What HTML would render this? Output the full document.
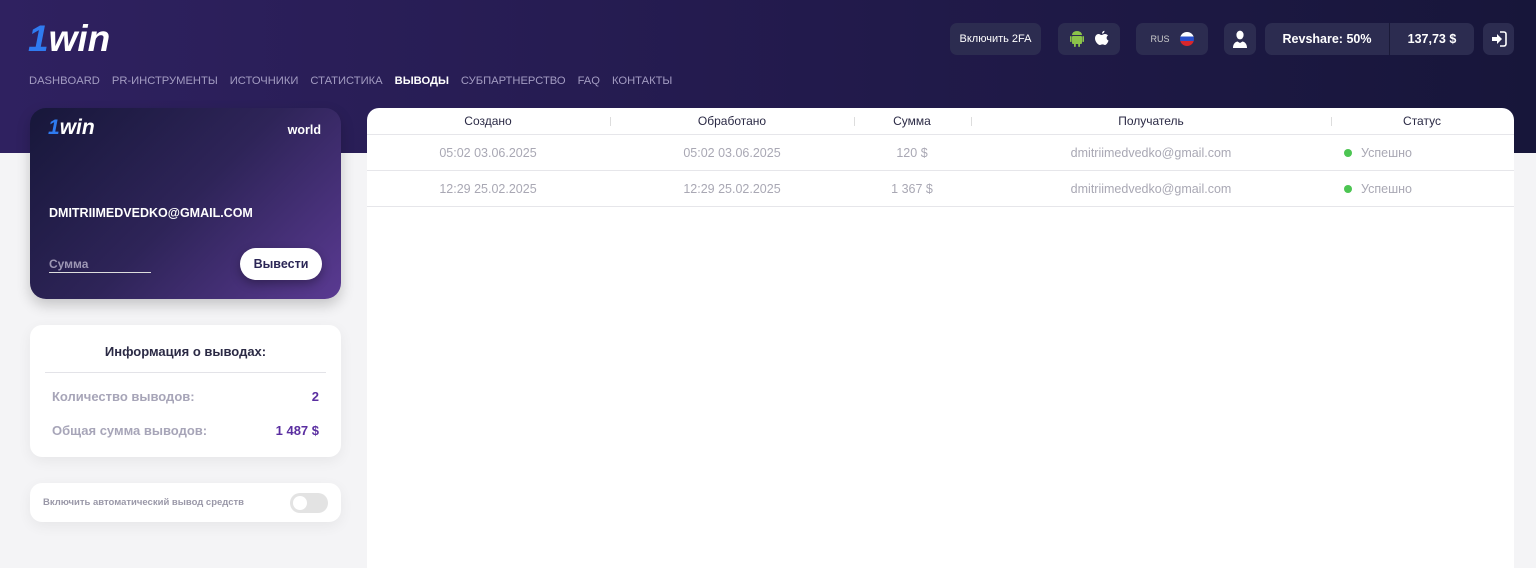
<!DOCTYPE html>
<html><head><meta charset="utf-8"><style>
*{margin:0;padding:0;box-sizing:border-box}
body{width:1536px;height:559px;overflow:hidden;background:#f4f4f6;font-family:"Liberation Sans","Noto Sans CJK SC",sans-serif;position:relative}
.hdr{position:absolute;left:0;top:0;width:1536px;height:153px;background:linear-gradient(90deg,#2f2160 0%,#241b4f 45%,#17163a 100%)}
.logo{position:absolute;font-weight:bold;font-style:italic;color:#fff;letter-spacing:0px}
.nav{position:absolute;top:75px;left:29px;font-size:11.2px;color:#a39cc2;white-space:nowrap}
.nav span{margin-right:12px}
.btn{position:absolute;top:23px;height:32px;background:#2c2c50;border-radius:7px;color:#fff;font-size:11px;display:flex;align-items:center;justify-content:center}
.card{position:absolute;left:30px;top:108px;width:311px;height:191px;border-radius:16px;background:linear-gradient(135deg,#17173a 0%,#2e2458 50%,#5a3a92 100%);box-shadow:0 6px 14px rgba(0,0,0,.2);color:#fff}
.box{position:absolute;left:30px;background:#fff;border-radius:12px;box-shadow:0 4px 14px rgba(0,0,0,.06)}
.tbl{position:absolute;left:367px;top:108px;width:1147px;height:460px;background:#fff;border-radius:12px 12px 0 0}
.row{position:absolute;left:0;width:1147px;border-bottom:1px solid #e6e6ea;font-size:12.5px}
.c{position:absolute;transform:translateX(-50%);white-space:nowrap}
.sep{position:absolute;top:9px;width:1px;height:9px;background:#ddd}
</style></head><body>
<div class="hdr"></div>
<div class="logo" style="left:28px;top:18px;font-size:37px"><span style="color:#2f7bf0">1</span>win</div>
<div class="nav"><span>DASHBOARD</span><span>PR-ИНСТРУМЕНТЫ</span><span>ИСТОЧНИКИ</span><span>СТАТИСТИКА</span><span style="color:#fff;font-weight:bold">ВЫВОДЫ</span><span>СУБПАРТНЕРСТВО</span><span>FAQ</span><span>КОНТАКТЫ</span></div>
<div class="btn" style="left:950px;width:91px">Включить 2FA</div>
<div class="btn" style="left:1058px;width:62px;gap:10px"><svg width="14" height="18" viewBox="0 0 14 18"><rect x="2" y="6" width="10" height="8" rx="1" fill="#8bc34a"/><path d="M2 5a5 4 0 0 1 10 0z" fill="#8bc34a"/><rect x="0" y="6" width="1.6" height="6" rx=".8" fill="#8bc34a"/><rect x="12.4" y="6" width="1.6" height="6" rx=".8" fill="#8bc34a"/><rect x="4" y="13" width="1.8" height="4" rx=".9" fill="#8bc34a"/><rect x="8.2" y="13" width="1.8" height="4" rx=".9" fill="#8bc34a"/></svg><svg width="15" height="18" viewBox="0 0 15 18"><path d="M7.5 5c1-0 2-1 3.5-1 1.5 0 2.5.8 3 1.5-2 1.2-1.8 4.2.5 5-.5 1.8-2 4.5-3.5 4.5-1 0-1.3-.6-2.5-.6s-1.6.6-2.6.6C4 15 1 11.5 1 8.5 1 5.5 3 4 4.5 4 5.8 4 6.6 5 7.5 5zM8 3.5C8 2 9.2.8 10.5.7 10.6 2.2 9.3 3.6 8 3.5z" fill="#fff"/></svg></div>
<div class="btn" style="left:1136px;width:72px;gap:10px;font-size:9px;color:#ccc">RUS <span style="width:14px;height:14px;border-radius:50%;background:linear-gradient(#fff 33%,#2a4fc9 33% 66%,#d8262c 66%)"></span></div>
<div class="btn" style="left:1224px;width:32px"><svg width="14" height="18" viewBox="0 0 14 18"><ellipse cx="7" cy="5" rx="3.6" ry="4.4" fill="#fff"/><path d="M0 18c0-4 2-6 4.5-6.5L7 13l2.5-1.5C12 12 14 14 14 18z" fill="#fff"/></svg></div>
<div class="btn" style="left:1265px;width:209px;font-size:12.5px;font-weight:bold;justify-content:flex-start"><span style="width:124px;text-align:center">Revshare: 50%</span><span style="width:1px;height:32px;background:#1a1a38"></span><span style="flex:1;text-align:center">137,73 $</span></div>
<div class="btn" style="left:1483px;width:31px"><svg width="16" height="16" viewBox="0 0 16 16"><path d="M9 1h4a2 2 0 0 1 2 2v10a2 2 0 0 1-2 2H9" stroke="#fff" stroke-width="1.6" fill="none"/><path d="M1 6h5V3l5 5-5 5v-3H1z" fill="#fff"/></svg></div>

<div class="card">
<div class="logo" style="left:18px;top:8px;font-size:21px"><span style="color:#2f7bf0">1</span>win</div>
<div style="position:absolute;right:20px;top:15px;font-size:12.5px;font-weight:bold">world</div>
<div style="position:absolute;left:19px;top:98px;font-size:12.5px;font-weight:bold">DMITRIIMEDVEDKO@GMAIL.COM</div>
<div style="position:absolute;left:19px;top:149px;width:102px;border-bottom:1px solid #ddd;font-size:12px;color:#9d97b4;font-weight:bold;padding-bottom:1px">Сумма</div>
<div style="position:absolute;left:210px;top:140px;width:82px;height:32px;background:#fff;border-radius:16px;color:#2b2656;font-size:12.5px;font-weight:bold;display:flex;align-items:center;justify-content:center;box-shadow:0 4px 10px rgba(0,0,0,.3)">Вывести</div>
</div>

<div class="box" style="top:325px;width:311px;height:132px">
<div style="position:absolute;top:19px;width:100%;text-align:center;font-weight:bold;font-size:13px;color:#2b2a45">Информация о выводах:</div>
<div style="position:absolute;left:15px;right:15px;top:47px;border-top:1px solid #e3e3e8"></div>
<div style="position:absolute;left:22px;top:64px;font-size:13px;font-weight:bold;color:#a7a5b8">Количество выводов:</div>
<div style="position:absolute;right:22px;top:64px;font-size:13px;font-weight:bold;color:#5a2ea0">2</div>
<div style="position:absolute;left:22px;top:98px;font-size:13px;font-weight:bold;color:#a7a5b8">Общая сумма выводов:</div>
<div style="position:absolute;right:22px;top:98px;font-size:13px;font-weight:bold;color:#5a2ea0">1 487 $</div>
</div>
<div class="box" style="top:483px;width:311px;height:39px">
<div style="position:absolute;left:13px;top:14px;font-size:9.5px;font-weight:bold;color:#9a98a8">Включить автоматический вывод средств</div>
<div style="position:absolute;left:260px;top:10px;width:38px;height:20px;border-radius:10px;background:#e3e3e3"><div style="position:absolute;left:3px;top:3px;width:14px;height:14px;border-radius:50%;background:#fff"></div></div>
</div>

<div class="tbl">
<div class="row" style="top:0;height:27px;color:#2b2a45;font-size:12px">
<span class="c" style="left:121px;top:6px">Создано</span><span class="c" style="left:365px;top:6px">Обработано</span><span class="c" style="left:545px;top:6px">Сумма</span><span class="c" style="left:784px;top:6px">Получатель</span><span class="c" style="left:1055px;top:6px">Статус</span>
<i class="sep" style="left:243px"></i><i class="sep" style="left:487px"></i><i class="sep" style="left:604px"></i><i class="sep" style="left:964px"></i>
</div>
<div class="row" style="top:27px;height:36px;color:#a9a8b4">
<span class="c" style="left:121px;top:11px">05:02 03.06.2025</span><span class="c" style="left:365px;top:11px">05:02 03.06.2025</span><span class="c" style="left:545px;top:11px">120 $</span><span class="c" style="left:784px;top:11px">dmitriimedvedko@gmail.com</span><span style="position:absolute;left:977px;top:11px"><i style="display:inline-block;width:8px;height:8px;border-radius:50%;background:#4cc552;margin-right:9px"></i>Успешно</span>
</div>
<div class="row" style="top:63px;height:36px;color:#a9a8b4">
<span class="c" style="left:121px;top:11px">12:29 25.02.2025</span><span class="c" style="left:365px;top:11px">12:29 25.02.2025</span><span class="c" style="left:545px;top:11px">1 367 $</span><span class="c" style="left:784px;top:11px">dmitriimedvedko@gmail.com</span><span style="position:absolute;left:977px;top:11px"><i style="display:inline-block;width:8px;height:8px;border-radius:50%;background:#4cc552;margin-right:9px"></i>Успешно</span>
</div>
</div>
</body></html>
